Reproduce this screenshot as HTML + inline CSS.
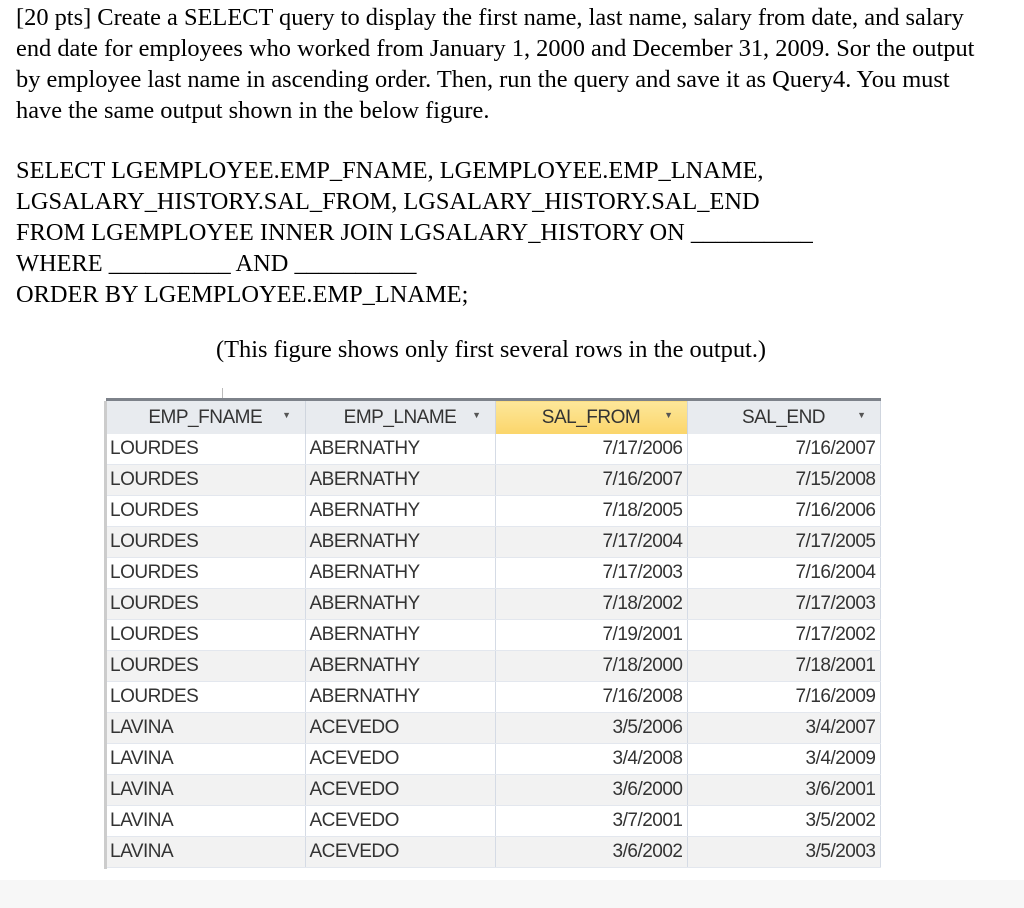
<!DOCTYPE html>
<html><head><style>
body{margin:0;width:1024px;height:908px;background:#fff;position:relative;overflow:hidden;font-family:"Liberation Serif",serif;color:#000}
.t{position:absolute;left:16px;font-size:24.4px;line-height:31px;white-space:nowrap}
.tbl{position:absolute;left:106px;top:398px;border-collapse:collapse;table-layout:fixed;width:774px;font-family:"Liberation Sans",sans-serif;font-size:19px;color:#333}
.tbl td{height:30px;padding:0 4px;border-right:1px solid #d5dbe5;border-bottom:1px solid #e3e7ee;letter-spacing:-0.5px;overflow:hidden}
.tbl th{height:31px;font-weight:normal;background:#e8ebef;border-right:1px solid #cfd5de;border-top:3px solid #7d828a;text-align:center;position:relative;letter-spacing:-0.5px}
.tbl th.y{background:linear-gradient(#fde79a,#fbd56a)}
.tbl th span{position:absolute;right:14px;top:9px;font-size:9px;color:#555}
.tbl tbody tr:nth-child(even) td{background:#f2f2f2}
.r{text-align:right}
</style></head><body>
<div class="t" style="top:2px">[20 pts] Create a SELECT query to display the first name, last name, salary from date, and salary<br>end date for employees who worked from January 1, 2000 and December 31, 2009. Sor the output<br>by employee last name in ascending order. Then, run the query and save it as Query4. You must<br>have the same output shown in the below figure.</div>
<div class="t" style="top:155px">SELECT LGEMPLOYEE.EMP_FNAME, LGEMPLOYEE.EMP_LNAME,<br>LGSALARY_HISTORY.SAL_FROM, LGSALARY_HISTORY.SAL_END<br>FROM LGEMPLOYEE INNER JOIN LGSALARY_HISTORY ON __________<br>WHERE __________ AND __________<br>ORDER BY LGEMPLOYEE.EMP_LNAME;</div>
<div class="t" style="top:334px;left:216px">(This figure shows only first several rows in the output.)</div>
<div style="position:absolute;left:222px;top:388px;width:666px;height:10px;border-left:1px solid #bbb;background:#fff"></div>
<table class="tbl">
<colgroup><col style="width:199px"><col style="width:190px"><col style="width:192px"><col style="width:193px"></colgroup>
<thead><tr><th>EMP_FNAME<span>▼</span></th><th>EMP_LNAME<span>▼</span></th><th class="y">SAL_FROM<span>▼</span></th><th>SAL_END<span>▼</span></th></tr></thead>
<tbody>
<tr><td>LOURDES</td><td>ABERNATHY</td><td class="r">7/17/2006</td><td class="r">7/16/2007</td></tr>
<tr><td>LOURDES</td><td>ABERNATHY</td><td class="r">7/16/2007</td><td class="r">7/15/2008</td></tr>
<tr><td>LOURDES</td><td>ABERNATHY</td><td class="r">7/18/2005</td><td class="r">7/16/2006</td></tr>
<tr><td>LOURDES</td><td>ABERNATHY</td><td class="r">7/17/2004</td><td class="r">7/17/2005</td></tr>
<tr><td>LOURDES</td><td>ABERNATHY</td><td class="r">7/17/2003</td><td class="r">7/16/2004</td></tr>
<tr><td>LOURDES</td><td>ABERNATHY</td><td class="r">7/18/2002</td><td class="r">7/17/2003</td></tr>
<tr><td>LOURDES</td><td>ABERNATHY</td><td class="r">7/19/2001</td><td class="r">7/17/2002</td></tr>
<tr><td>LOURDES</td><td>ABERNATHY</td><td class="r">7/18/2000</td><td class="r">7/18/2001</td></tr>
<tr><td>LOURDES</td><td>ABERNATHY</td><td class="r">7/16/2008</td><td class="r">7/16/2009</td></tr>
<tr><td>LAVINA</td><td>ACEVEDO</td><td class="r">3/5/2006</td><td class="r">3/4/2007</td></tr>
<tr><td>LAVINA</td><td>ACEVEDO</td><td class="r">3/4/2008</td><td class="r">3/4/2009</td></tr>
<tr><td>LAVINA</td><td>ACEVEDO</td><td class="r">3/6/2000</td><td class="r">3/6/2001</td></tr>
<tr><td>LAVINA</td><td>ACEVEDO</td><td class="r">3/7/2001</td><td class="r">3/5/2002</td></tr>
<tr><td>LAVINA</td><td>ACEVEDO</td><td class="r">3/6/2002</td><td class="r">3/5/2003</td></tr>
</tbody></table>
<div style="position:absolute;left:104px;top:401px;width:3px;height:468px;background:#ccc"></div>
<div style="position:absolute;left:0;top:880px;width:1024px;height:28px;background:#f7f7f7"></div>
</body></html>
